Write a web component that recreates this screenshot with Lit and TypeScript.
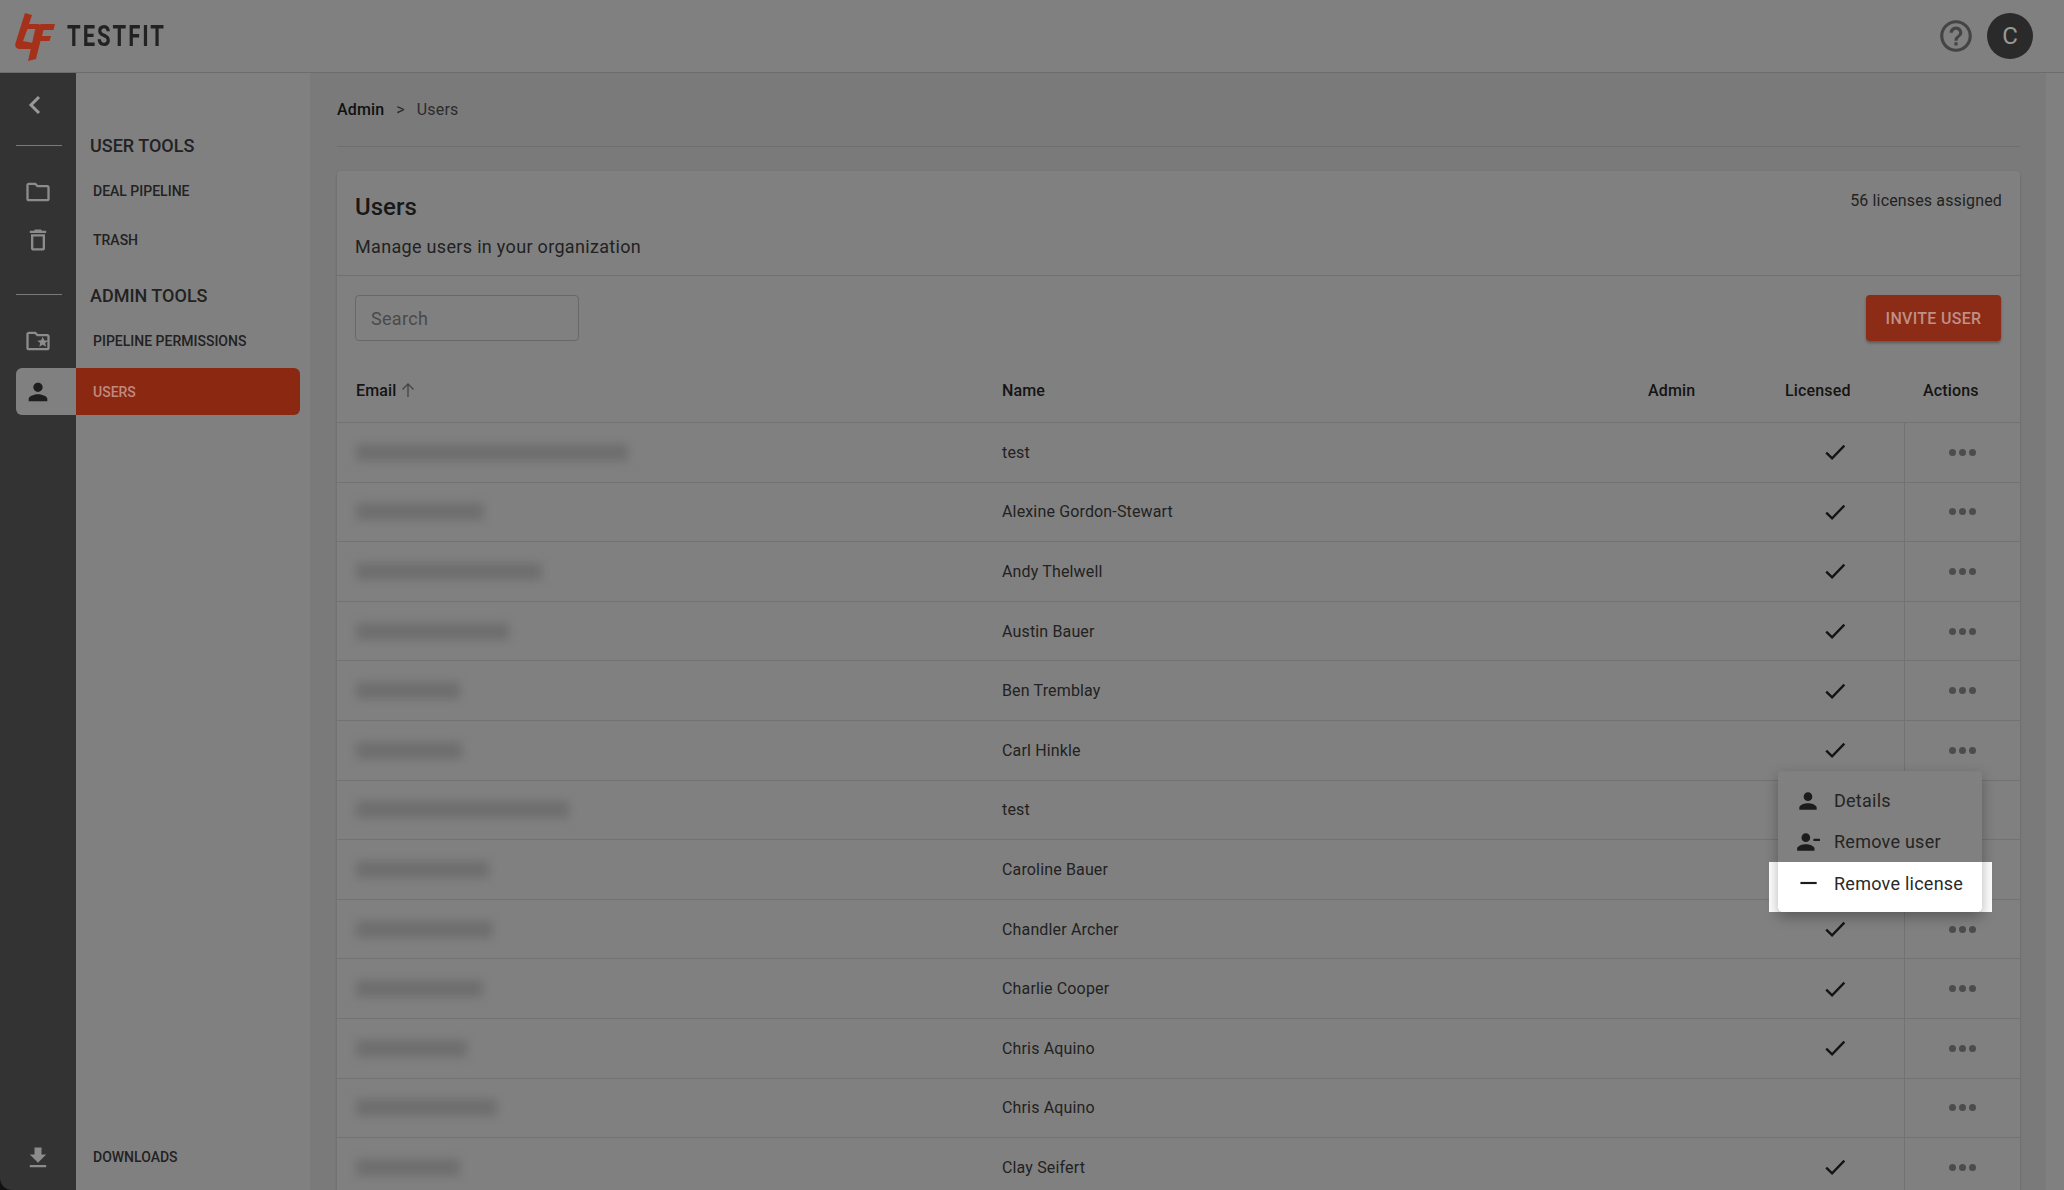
import { LitElement, css, html, svg } from 'lit'
import { customElement } from 'lit/decorators.js'

const icon = (d: string, size = 24) =>
  html`<svg width=${size} height=${size} viewBox="0 0 24 24" fill="currentColor">${svg`<path d=${d}></path>`}</svg>`

const PERSON = 'M12 12c2.21 0 4-1.79 4-4s-1.79-4-4-4-4 1.79-4 4 1.79 4 4 4zm0 2c-2.67 0-8 1.34-8 4v2h16v-2c0-2.66-5.33-4-8-4z'
const FOLDER = 'M9.17 6l2 2H20v10H4V6h5.17M10 4H4c-1.1 0-1.99.9-1.99 2L2 18c0 1.1.9 2 2 2h16c1.1 0 2-.9 2-2V8c0-1.1-.9-2-2-2h-8l-2-2z'
const TRASH = 'M6 19c0 1.1.9 2 2 2h8c1.1 0 2-.9 2-2V7H6v12zM8 9h8v10H8V9zm7.5-5l-1-1h-5l-1 1H5v2h14V4z'
const FOLDER_STAR = 'M20 6h-8l-2-2H4c-1.1 0-2 .9-2 2v12c0 1.1.9 2 2 2h16c1.1 0 2-.9 2-2V8c0-1.1-.9-2-2-2zm0 12H4V6h5.17l2 2H20v10zm-6.9-1l2.9-1.7 2.9 1.7-.8-3.2 2.5-2.1-3.3-.3-1.3-3-1.3 3-3.3.3 2.5 2.1z'
const DOWNLOAD = 'M19 9h-4V3H9v6H5l7 7 7-7zM5 18v2h14v-2H5z'
const HELP = 'M11 18h2v-2h-2v2zm1-16C6.48 2 2 6.48 2 12s4.48 10 10 10 10-4.48 10-10S17.52 2 12 2zm0 18c-4.41 0-8-3.59-8-8s3.59-8 8-8 8 3.59 8 8-3.59 8-8 8zm0-14c-2.21 0-4 1.79-4 4h2c0-1.1.9-2 2-2s2 .9 2 2c0 2-3 1.75-3 5h2c0-2.25 3-2.5 3-5 0-2.21-1.79-4-4-4z'
const PERSON_MINUS = 'M10 12c2.21 0 4-1.79 4-4s-1.79-4-4-4-4 1.79-4 4 1.79 4 4 4zm0 2c-2.67 0-8 1.34-8 4v2h16v-2c0-2.66-5.33-4-8-4zm7-5h6v2h-6z'

// blur = width of the hidden email
const USERS = [
  { blur: 272, name: 'test', licensed: true },
  { blur: 128, name: 'Alexine Gordon-Stewart', licensed: true },
  { blur: 186, name: 'Andy Thelwell', licensed: true },
  { blur: 153, name: 'Austin Bauer', licensed: true },
  { blur: 104, name: 'Ben Tremblay', licensed: true },
  { blur: 106, name: 'Carl Hinkle', licensed: true },
  { blur: 213, name: 'test', licensed: true },
  { blur: 133, name: 'Caroline Bauer', licensed: true },
  { blur: 137, name: 'Chandler Archer', licensed: true },
  { blur: 127, name: 'Charlie Cooper', licensed: true },
  { blur: 111, name: 'Chris Aquino', licensed: true },
  { blur: 141, name: 'Chris Aquino', licensed: false },
  { blur: 104, name: 'Clay Seifert', licensed: true },
]

@customElement('app-root')
export class AppRoot extends LitElement {
  static styles = css`
    :host {
      display: flex;
      flex-direction: column;
      position: relative;
      height: 1190px;
      overflow: hidden;
      font-family: Roboto, sans-serif;
      color: #1c1c1c;
      background: #808080;
    }

    /* top bar */
    .top {
      flex: none;
      height: 72px;
      display: flex;
      align-items: center;
      border-bottom: 1px solid #6c6c6c;
      padding-right: 31px;
    }
    .logo {
      flex: none;
    }
    .wordmark {
      margin-left: 7px;
      font-size: 29px;
      font-weight: 700;
      letter-spacing: 2.6px;
      color: #222;
      transform: scaleX(0.76);
      transform-origin: left center;
    }
    .top-right {
      margin-left: auto;
      display: flex;
      align-items: center;
      gap: 12px;
    }
    .help {
      display: flex;
      color: #444;
    }
    .avatar {
      width: 46px;
      height: 46px;
      border-radius: 50%;
      background: #2a2a2a;
      color: #989898;
      font-size: 24px;
      display: flex;
      align-items: center;
      justify-content: center;
    }

    .body {
      flex: 1;
      min-height: 0;
      display: flex;
    }

    /* icon rail */
    .rail-wrap {
      flex: none;
      width: 76px;
      background: #111;
    }
    .rail {
      height: 100%;
      background: #333;
      border-bottom-left-radius: 12px;
      display: flex;
      flex-direction: column;
      color: #8c8c8c;
    }
    .rail-item {
      flex: none;
      height: 48px;
      display: flex;
      align-items: center;
      justify-content: center;
    }
    .back {
      height: 64px;
      color: #999;
      padding-right: 6px;
    }
    .rail hr {
      flex: none;
      width: 46px;
      height: 1px;
      margin: 8px 0 0 16px;
      border: 0;
      background: #7a7a7a;
    }
    .rail hr + .rail-item {
      margin-top: 22px;
    }
    .rail .second-rule {
      margin-top: 30px;
    }
    .rail .active {
      height: 47px;
      margin: 3px 0 0 16px;
      padding: 0 16px 0 0;
      background: #808080;
      border-radius: 6px 0 0 6px;
      color: #1e1e1e;
    }
    .rail .bottom,
    .nav .bottom {
      margin-top: auto;
      margin-bottom: 9px;
    }
    .rail .bottom {
      margin-bottom: 8px;
    }

    /* text nav */
    .nav {
      flex: none;
      width: 234px;
      display: flex;
      flex-direction: column;
      padding-top: 61px;
      box-sizing: border-box;
    }
    .nav h3 {
      margin: 0 0 0 14px;
      height: 24px;
      line-height: 24px;
      font-size: 18px;
      font-weight: 500;
      color: #222;
    }
    .nav h3.admin {
      margin-top: 20px;
    }
    .nav-item {
      flex: none;
      height: 48px;
      display: flex;
      align-items: center;
      padding-left: 17px;
      font-size: 14px;
      font-weight: 500;
      color: #222;
    }
    .nav-item.first {
      margin-top: 9px;
    }
    .nav-item.trash {
      margin-top: 1px;
    }
    .nav-item.perm {
      margin-top: 9px;
    }
    .nav-item.on {
      height: 47px;
      margin-top: 3px;
      width: 224px;
      box-sizing: border-box;
      background: #8a2812;
      border-radius: 0 6px 6px 0;
      color: #c08a80;
    }

    /* main column */
    .main {
      flex: none;
      width: 1736px;
      box-sizing: border-box;
      padding: 0 26px 0 27px;
      background: #7a7a7a;
      overflow: hidden;
    }
    .crumbs {
      height: 74px;
      box-sizing: border-box;
      border-bottom: 1px solid #6e6e6e;
      display: flex;
      align-items: center;
      gap: 11px;
      font-size: 16px;
      letter-spacing: 0.15px;
      color: #2c2c2c;
    }
    .crumbs b {
      font-weight: 500;
      color: #111;
    }
    .crumbs span:first-of-type {
      margin-left: 1px;
      margin-right: 1px;
    }
    .card {
      margin-top: 24px;
      background: #808080;
      border-radius: 4px 4px 0 0;
      box-shadow: 0 1px 3px rgba(0, 0, 0, 0.18);
    }
    .card-head {
      height: 105px;
      box-sizing: border-box;
      border-bottom: 1px solid #707070;
      padding: 18px 18px 0;
      display: flex;
      justify-content: space-between;
    }
    .card-head h1 {
      margin: 0;
      font-size: 24px;
      line-height: 36px;
      font-weight: 500;
      color: #181818;
    }
    .card-head p {
      margin: 9px 0 0;
      font-size: 18px;
      line-height: 26px;
      letter-spacing: 0.32px;
      color: #222;
    }
    .count {
      font-size: 16px;
      line-height: 24px;
      letter-spacing: 0.15px;
      color: #222;
    }
    .tools {
      display: flex;
      justify-content: space-between;
      padding: 19px 19px 17px 18px;
    }
    .search {
      width: 224px;
      height: 46px;
      box-sizing: border-box;
      border: 1.5px solid #686868;
      border-radius: 4px;
      padding-left: 15px;
      display: flex;
      align-items: center;
      font-size: 18px;
      letter-spacing: 0.3px;
      color: #4a4a4a;
    }
    .invite {
      width: 135px;
      height: 46px;
      border-radius: 4px;
      background: #8c2b16;
      box-shadow: 0 2px 3px rgba(0, 0, 0, 0.3);
      color: #c08f85;
      font-size: 16px;
      font-weight: 500;
      letter-spacing: 0.3px;
      display: flex;
      align-items: center;
      justify-content: center;
    }

    /* table */
    .row {
      display: grid;
      grid-template-columns: 646px 646px 137px 119px 1fr;
      padding-left: 19px;
      align-items: center;
      box-sizing: border-box;
      border-bottom: 1.5px solid #727272;
      height: 59.6px;
      font-size: 16px;
      letter-spacing: 0.15px;
      color: #222;
    }
    .row.head {
      height: 65px;
      font-weight: 500;
      color: #141414;
    }
    .email {
      display: flex;
      align-items: center;
      gap: 3px;
      color: #141414;
    }
    .arrow {
      color: #444;
    }
    .blur {
      height: 17px;
      margin-left: 0;
      background: #6e6e6e;
      filter: blur(5px);
    }
    .check {
      justify-self: start;
      margin-left: 36px;
      display: flex;
      color: #141414;
    }
    .actions {
      align-self: stretch;
      border-left: 1.5px solid #727272;
      display: flex;
      align-items: center;
      justify-content: center;
      gap: 3px;
    }
    .actions i {
      width: 7px;
      height: 7px;
      border-radius: 50%;
      background: #4c4c4c;
    }
    .head .actions-label {
      padding-left: 19px;
    }

    /* row menu with the highlighted entry */
    .spot {
      position: absolute;
      left: 1769px;
      top: 862px;
      width: 223px;
      height: 50px;
      background: #fff;
    }
    .menu {
      position: absolute;
      left: 1778px;
      top: 771px;
      width: 204px;
      height: 141px;
      background: #808080;
      border-radius: 4px;
      box-shadow: 0 5px 14px rgba(0, 0, 0, 0.3);
      font-size: 18px;
      letter-spacing: 0.25px;
      color: #242424;
    }
    .menu-item {
      height: 41px;
      display: flex;
      align-items: center;
      padding-left: 17px;
      gap: 13px;
    }
    .menu-item:first-child {
      height: 50px;
      padding-top: 9px;
      box-sizing: border-box;
    }
    .menu-item.lit {
      height: 50px;
      box-sizing: border-box;
      padding-bottom: 8px;
      border-radius: 0 0 4px 4px;
      background: #fff;
      color: #2a2a2a;
    }
    .menu-item svg {
      flex: none;
      color: #1c1c1c;
    }

    .gutter {
      flex: 1;
    }
  `

  render() {
    return html`
      <div class="top">
        <svg class="logo" width="60" height="72" viewBox="0 0 60 72" fill="#a5311a">
          <path d="M25 13 L32 15 L29 24 L39 24 L37.5 29 L27.5 29 L23 41 L33 43 L31.5 49 L19 49 Q14 48 15.5 43 Z"></path>
          <path d="M42 24 L55 24 L53.5 30 L43.5 30 L42 36 L51 36 L49.5 41 L40.5 41 L36 59 L28 61 L35 30 Q36 24 42 24 Z"></path>
        </svg>
        <span class="wordmark">TESTFIT</span>
        <div class="top-right">
          <span class="help">${icon(HELP, 38)}</span>
          <span class="avatar">C</span>
        </div>
      </div>

      <div class="body">
        <div class="rail-wrap">
          <div class="rail">
            <div class="rail-item back">
              <svg width="24" height="24" viewBox="0 0 24 24" fill="none" stroke="currentColor" stroke-width="3">
                <path d="M16 4 L8 12 L16 20"></path>
              </svg>
            </div>
            <hr />
            <div class="rail-item">${icon(FOLDER, 28)}</div>
            <div class="rail-item">${icon(TRASH, 28)}</div>
            <hr class="second-rule" />
            <div class="rail-item">${icon(FOLDER_STAR, 28)}</div>
            <div class="rail-item active">${icon(PERSON, 28)}</div>
            <div class="rail-item bottom">${icon(DOWNLOAD, 28)}</div>
          </div>
        </div>

        <nav class="nav">
          <h3>USER TOOLS</h3>
          <div class="nav-item first">DEAL PIPELINE</div>
          <div class="nav-item trash">TRASH</div>
          <h3 class="admin">ADMIN TOOLS</h3>
          <div class="nav-item perm">PIPELINE PERMISSIONS</div>
          <div class="nav-item on">USERS</div>
          <div class="nav-item bottom">DOWNLOADS</div>
        </nav>

        <main class="main">
          <div class="crumbs"><b>Admin</b><span>&gt;</span><span>Users</span></div>
          <section class="card">
            <div class="card-head">
              <div>
                <h1>Users</h1>
                <p>Manage users in your organization</p>
              </div>
              <div class="count">56 licenses assigned</div>
            </div>
            <div class="tools">
              <div class="search">Search</div>
              <div class="invite">INVITE USER</div>
            </div>
            <div class="row head">
              <div class="email">
                Email
                <svg class="arrow" width="16" height="16" viewBox="0 0 16 16" fill="none" stroke="currentColor" stroke-width="1.3">
                  <path d="M8 15 V2 M2.5 7.5 L8 2 L13.5 7.5"></path>
                </svg>
              </div>
              <div>Name</div>
              <div>Admin</div>
              <div>Licensed</div>
              <div class="actions-label">Actions</div>
            </div>
            ${USERS.map(
              (u) => html`
                <div class="row">
                  <div class="blur" style="width:${u.blur}px"></div>
                  <div>${u.name}</div>
                  <div></div>
                  <div>
                    ${u.licensed
                      ? html`<span class="check">
                          <svg width="28" height="28" viewBox="0 0 24 24" fill="none" stroke="currentColor" stroke-width="2">
                            <path d="M4.5 12.5 L9.5 17.5 L20 6.5"></path>
                          </svg>
                        </span>`
                      : ''}
                  </div>
                  <div class="actions"><i></i><i></i><i></i></div>
                </div>
              `,
            )}
          </section>
        </main>
        <div class="gutter"></div>
      </div>

      <div class="spot"></div>
      <div class="menu">
        <div class="menu-item">${icon(PERSON, 26)}<span>Details</span></div>
        <div class="menu-item">${icon(PERSON_MINUS, 26)}<span>Remove user</span></div>
        <div class="menu-item lit">
          <svg width="26" height="26" viewBox="0 0 24 24" fill="currentColor"><path d="M5 11h15v2H5z"></path></svg>
          <span>Remove license</span>
        </div>
      </div>
    `
  }
}
